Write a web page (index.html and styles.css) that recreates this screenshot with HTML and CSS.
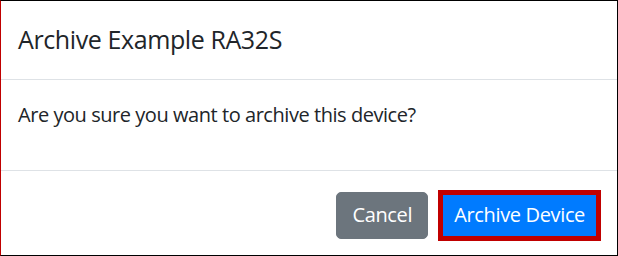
FILE: index.html
```html
<!DOCTYPE html>
<html>
<head>
<meta charset="utf-8">
<link rel="stylesheet" href="styles.css">
</head>
<body>
<div class="frame">
  <div class="modal">
    <div class="modal-header">
      <h5 class="modal-title">Archive Example RA32S</h5>
    </div>
    <div class="modal-body">
      <p class="message">Are you sure you want to archive this device?</p>
    </div>
    <div class="modal-footer">
      <button class="btn btn-cancel">Cancel</button>
      <button class="btn btn-archive">Archive Device</button>
    </div>
  </div>
</div>
</body>
</html>
```

FILE: styles.css
```css
* { box-sizing: border-box; }
html, body {
  margin: 0;
  padding: 0;
  background: #fff;
}
body {
  font-family: "Open Sans", "Noto Sans", sans-serif;
  color: #212529;
}
.frame {
  width: 618px;
  height: 256px;
  border-top: 1px solid #000;
  border-left: 1px solid #c00000;
  border-right: 1px solid #000;
  border-bottom: 1px solid #000;
  overflow: hidden;
  background: #fff;
}
.modal {
  display: flex;
  flex-direction: column;
}
.modal-header {
  padding: 20px 17px;
  border-bottom: 1px solid #dee2e6;
}
.modal-title {
  margin: 0;
  font-size: 25px;
  font-weight: 500;
  line-height: 37.5px;
  letter-spacing: -0.4px;
}
.modal-body {
  padding: 20px 17px;
  border-bottom: 1px solid #dee2e6;
}
.message {
  margin: 0 0 20px;
  font-size: 20px;
  line-height: 30px;
  letter-spacing: -0.45px;
}
.modal-footer {
  display: flex;
  justify-content: flex-end;
  align-items: center;
  gap: 10px;
  padding: 19px 16px 15px;
}
.btn {
  font-family: inherit;
  font-size: 20px;
  line-height: 30px;
  letter-spacing: -0.35px;
  color: #fff;
  border-radius: 5px;
  cursor: pointer;
}
.btn-cancel {
  background: #6c757d;
  border: 1px solid #6c757d;
  padding: 7.5px 15px;
}
.btn-archive {
  background: #007bff;
  border: 5px solid #c00000;
  border-radius: 0;
  padding: 5px 11px 6px;
}
```
